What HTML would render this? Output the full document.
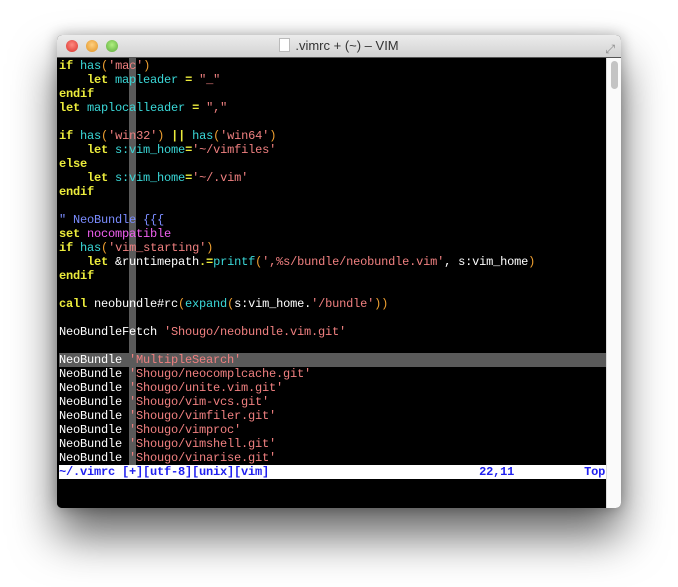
<!DOCTYPE html>
<html><head><meta charset="utf-8"><style>
body{margin:0;width:678px;height:587px;background:#fff;position:relative;overflow:hidden}
.win{position:absolute;left:57px;top:35px;width:564px;height:473px;border-radius:5px;background:#000;box-shadow:0 28px 45px rgba(0,0,0,.6),0 0 14px rgba(0,0,0,.3);overflow:hidden}
.tb{position:absolute;left:0;top:0;width:564px;height:22px;background:linear-gradient(#ececec,#d2d2d2);border-bottom:1px solid #555;font:13px "Liberation Sans",sans-serif;color:#333;text-align:center;line-height:22px}
.dot{position:absolute;top:5px;width:12px;height:12px;border-radius:50%}
.term{position:absolute;left:0;top:23px;width:549px;height:450px;background:#000}
.sb{position:absolute;left:549px;top:23px;width:15px;height:450px;background:#fafafa;border-left:1px solid #ddd}
.thumb{position:absolute;left:4px;top:3px;width:7px;height:28px;border-radius:4px;background:#c4c4c4}
.col{position:absolute;left:72px;top:0;width:7px;height:407px;background:#5a5a5a}
pre{position:absolute;left:2px;top:1px;margin:0;font:12px "Liberation Mono",monospace;letter-spacing:-0.2px;line-height:14px;color:#fff}
.y{color:#ecec3c;font-weight:bold}.c{color:#3ad8d8}.s{color:#f08080}.o{color:#f0a030}.m{color:#f060f0}.b{color:#7a8cff}
.hl{display:inline-block;width:547px;background:#5a5a5a}
.st{display:inline-block;width:547px;background:#fff;color:#2020f0;font-weight:bold}
</style></head><body>
<div class="win">
<div class="tb">
<div class="dot" style="left:9px;background:radial-gradient(circle at 50% 40%,#ff8a80,#d8312a);"></div>
<div class="dot" style="left:29px;background:radial-gradient(circle at 50% 40%,#ffd080,#e09020);"></div>
<div class="dot" style="left:49px;background:radial-gradient(circle at 50% 40%,#b0f080,#5aa83a);"></div>
<span style="display:inline-block;width:9px;height:12px;background:#fff;border:1px solid #bbb;vertical-align:-2px;margin-right:5px"></span>.vimrc + (~) – VIM
<span style="position:absolute;right:6px;top:3px;color:#888;font-size:12px">⤢</span>
</div>
<div class="term"><div class="col"></div>
<pre><span class="y">if</span> <span class="c">has</span><span class="o">(</span><span class="s">'mac'</span><span class="o">)</span>
    <span class="y">let</span> <span class="c">mapleader</span> <span class="y">=</span> <span class="s">"_"</span>
<span class="y">endif</span>
<span class="y">let</span> <span class="c">maplocalleader</span> <span class="y">=</span> <span class="s">","</span>

<span class="y">if</span> <span class="c">has</span><span class="o">(</span><span class="s">'win32'</span><span class="o">)</span> <span class="y">||</span> <span class="c">has</span><span class="o">(</span><span class="s">'win64'</span><span class="o">)</span>
    <span class="y">let</span> <span class="c">s:vim_home</span><span class="y">=</span><span class="s">'~/vimfiles'</span>
<span class="y">else</span>
    <span class="y">let</span> <span class="c">s:vim_home</span><span class="y">=</span><span class="s">'~/.vim'</span>
<span class="y">endif</span>

<span class="b">" NeoBundle {{{</span>
<span class="y">set</span> <span class="m">nocompatible</span>
<span class="y">if</span> <span class="c">has</span><span class="o">(</span><span class="s">'vim_starting'</span><span class="o">)</span>
    <span class="y">let</span> &amp;runtimepath<span class="y">.=</span><span class="c">printf</span><span class="o">(</span><span class="s">',%s/bundle/neobundle.vim'</span>, s:vim_home<span class="o">)</span>
<span class="y">endif</span>

<span class="y">call</span> neobundle#rc<span class="o">(</span><span class="c">expand</span><span class="o">(</span>s:vim_home.<span class="s">'/bundle'</span><span class="o">))</span>

NeoBundleFetch <span class="s">'Shougo/neobundle.vim.git'</span>

<span class="hl">NeoBundle <span class="s">'MultipleSearch'</span></span>
NeoBundle <span class="s">'Shougo/neocomplcache.git'</span>
NeoBundle <span class="s">'Shougo/unite.vim.git'</span>
NeoBundle <span class="s">'Shougo/vim-vcs.git'</span>
NeoBundle <span class="s">'Shougo/vimfiler.git'</span>
NeoBundle <span class="s">'Shougo/vimproc'</span>
NeoBundle <span class="s">'Shougo/vimshell.git'</span>
NeoBundle <span class="s">'Shougo/vinarise.git'</span>
<span class="st">~/.vimrc [+][utf-8][unix][vim]                              22,11          Top</span></pre>
</div>
<div class="sb"><div class="thumb"></div></div>
</div>
</body></html>
